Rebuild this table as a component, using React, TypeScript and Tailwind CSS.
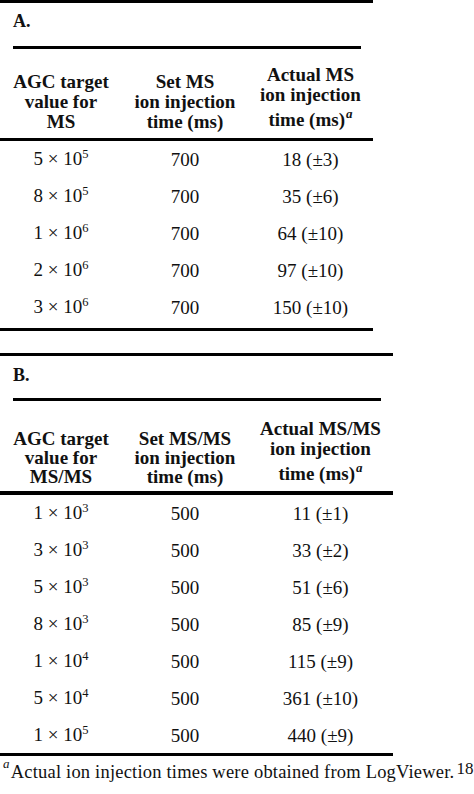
import React from "react";

// ============================================
// Data
// ============================================

interface Row {
	mant: string;
	exp: string;
	set: string;
	actual: string;
}

const tableA: Row[] = [
	{ mant: "5", exp: "5", set: "700", actual: "18 (±3)" },
	{ mant: "8", exp: "5", set: "700", actual: "35 (±6)" },
	{ mant: "1", exp: "6", set: "700", actual: "64 (±10)" },
	{ mant: "2", exp: "6", set: "700", actual: "97 (±10)" },
	{ mant: "3", exp: "6", set: "700", actual: "150 (±10)" },
];

const tableB: Row[] = [
	{ mant: "1", exp: "3", set: "500", actual: "11 (±1)" },
	{ mant: "3", exp: "3", set: "500", actual: "33 (±2)" },
	{ mant: "5", exp: "3", set: "500", actual: "51 (±6)" },
	{ mant: "8", exp: "3", set: "500", actual: "85 (±9)" },
	{ mant: "1", exp: "4", set: "500", actual: "115 (±9)" },
	{ mant: "5", exp: "4", set: "500", actual: "361 (±10)" },
	{ mant: "1", exp: "5", set: "500", actual: "440 (±9)" },
];

// ============================================
// Pieces
// ============================================

function Rule({ className }: { className: string }) {
	return <div className={`bg-black ${className}`} />;
}

function HeaderCell({
	lines,
	width,
	leading,
	sup,
}: {
	lines: string[];
	width: string;
	leading: string;
	sup?: boolean;
}) {
	return (
		<div className={`flex flex-col items-center justify-end ${width}`}>
			{lines.map((line, i) => {
				const last = i === lines.length - 1;
				return (
					<div
						key={i}
						className={`whitespace-nowrap ${leading} ${last && sup ? "mt-[5px]" : ""}`}>
						{line}
						{last && sup && (
							<span className="relative -top-[8px] ml-[1px] text-[13px] italic">a</span>
						)}
					</div>
				);
			})}
		</div>
	);
}

function DataRow({ row }: { row: Row }) {
	return (
		<div className="flex h-[37px] items-center text-[19px] font-normal leading-[20px]">
			<div className="w-[122px] text-center whitespace-nowrap">
				{row.mant} × 10
				<span className="relative -top-[7px] text-[12.5px]">{row.exp}</span>
			</div>
			<div className="w-[126px] text-center">{row.set}</div>
			<div className="flex-1 text-center whitespace-nowrap">{row.actual}</div>
		</div>
	);
}

function Section({
	label,
	width,
	innerWidth,
	col1,
	col2,
	col3,
	rows,
	labelBox,
	headerBox,
	headerRule,
	leading,
}: {
	label: string;
	width: string;
	innerWidth: string;
	col1: string[];
	col2: string[];
	col3: string[];
	rows: Row[];
	labelBox: string;
	headerBox: string;
	headerRule: string;
	leading: string;
}) {
	return (
		<div className={width}>
			<Rule className="h-[3px] w-full" />
			<div className={`pl-[13px] text-[18px] font-bold leading-[20px] ${labelBox}`}>
				{label}
			</div>
			<Rule className={`ml-[13px] h-[3px] ${innerWidth}`} />
			<div className={`flex text-[19px] font-bold ${headerBox}`}>
				<HeaderCell lines={col1} width="w-[122px]" leading={leading} />
				<HeaderCell lines={col2} width="w-[126px]" leading={leading} />
				<HeaderCell lines={col3} width="flex-1" leading="leading-[20px]" sup />
			</div>
			<Rule className={`${headerRule} w-full`} />
			{rows.map((row, i) => (
				<DataRow key={i} row={row} />
			))}
		</div>
	);
}

// ============================================
// App
// ============================================

export default function App() {
	return (
		<div className="h-[794px] w-[474px] overflow-hidden bg-white font-[family-name:'Liberation_Serif','Times_New_Roman',serif] text-[#111]">
			<Section
				label="A."
				width="w-[373px]"
				innerWidth="w-[348px]"
				labelBox="h-[43px] pt-[8px]"
				headerBox="h-[89px] pb-[6px]"
				headerRule="h-[3px]"
				leading="leading-[20px]"
				col1={["AGC target", "value for", "MS"]}
				col2={["Set MS", "ion injection", "time (ms)"]}
				col3={["Actual MS", "ion injection", "time (ms)"]}
				rows={tableA}
			/>
			<Rule className="mt-[2px] h-[3px] w-[373px]" />

			<div className="h-[22px]" />

			<Section
				label="B."
				width="w-[393px]"
				innerWidth="w-[368px]"
				labelBox="h-[42px] pt-[9px]"
				headerBox="h-[90px] pb-[5px]"
				headerRule="h-[4px]"
				leading="leading-[19px]"
				col1={["AGC target", "value for", "MS/MS"]}
				col2={["Set MS/MS", "ion injection", "time (ms)"]}
				col3={["Actual MS/MS", "ion injection", "time (ms)"]}
				rows={tableB}
			/>
			<Rule className="-mt-[1px] h-[3px] w-[393px]" />

			{/* Footnote */}
			<div className="whitespace-nowrap pt-[4px] text-[18.5px] leading-[24px] tracking-[0.2px]">
				<span className="relative -top-[10px] ml-[3px] mr-[1px] text-[13px] italic">a</span>
				Actual ion injection times were obtained from LogViewer.
				<span className="relative -top-[4px] ml-[2px] text-[17px]">18</span>
			</div>
		</div>
	);
}
